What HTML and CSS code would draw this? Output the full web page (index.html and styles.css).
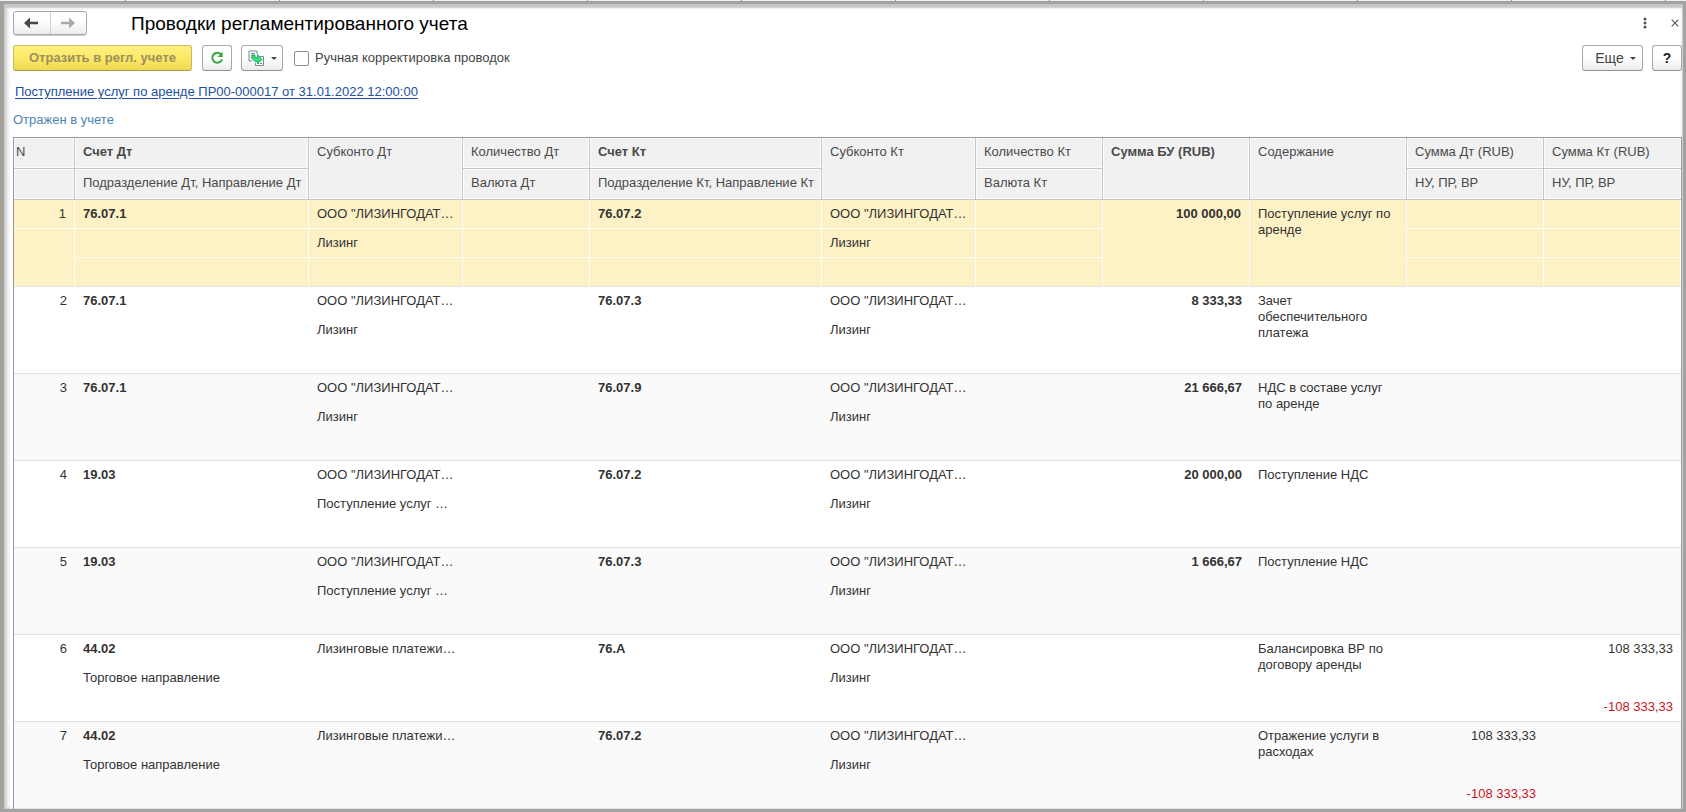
FILE: index.html
```html
<!DOCTYPE html>
<html lang="ru">
<head>
<meta charset="utf-8">
<title>Проводки регламентированного учета</title>
<link rel="stylesheet" href="styles.css">
</head>
<body>
<div class="ruler"></div>
<main class="window">
  <header class="titlebar">
    <div class="nav">
      <button class="nav-btn" type="button" aria-label="Назад"><svg width="15" height="12" viewBox="0 0 15 12"><path d="M0 6 6 0.5V4.8H14V7.2H6V11.5Z" fill="#484848"/></svg></button>
      <button class="nav-btn" type="button" aria-label="Вперед"><svg width="15" height="12" viewBox="0 0 15 12"><path d="M14 6 8 0.5V4.8H0V7.2H8V11.5Z" fill="#a9a9a9"/></svg></button>
    </div>
    <h1 class="title">Проводки регламентированного учета</h1>
    <button class="plain" type="button" aria-label="Меню"><svg width="4" height="12" viewBox="0 0 4 12" fill="#555"><circle cx="2" cy="2" r="1.5"/><circle cx="2" cy="6" r="1.5"/><circle cx="2" cy="10" r="1.5"/></svg></button>
    <button class="plain" type="button" aria-label="Закрыть"><svg width="8" height="8" viewBox="0 0 8 8"><path d="M.7.7 7.3 7.3M7.3.7.7 7.3" stroke="#555" stroke-width="1.1"/></svg></button>
  </header>
  <div class="toolbar">
    <button class="btn primary" type="button">Отразить в регл. учете</button>
    <button class="btn square" type="button" aria-label="Обновить"><svg width="14" height="14" viewBox="0 0 14 14"><path d="M11 3.3A5 5 0 1 0 12 8.3" fill="none" stroke="#36a63a" stroke-width="2"/><path d="M12.6.8V6H7.6Z" fill="#36a63a"/></svg></button>
    <button class="btn picker" type="button" aria-label="Создать на основании"><svg width="17" height="17" viewBox="0 0 17 17"><path d="M1 11V1H9V4" fill="#fff" stroke="#71869a"/><path d="M1 11H4M3 3.5H7M3 5.5H5M3 7.5H4" fill="none" stroke="#71869a"/><path d="M12 6.5H15.5V15.5H7.5V13" fill="#fff" stroke="#71869a"/><path d="M12 13.5H14M9.5 13.5H11" stroke="#71869a"/><path d="M4 5H7V7.5H9.5V4.5L14 9.5 9.5 14V11.5H7L4 8.5Z" fill="#35df7b" stroke="#159a4c" stroke-width=".8"/></svg><span class="caret"></span></button>
    <label class="check"><input type="checkbox">Ручная корректировка проводок</label>
    <button class="btn more" type="button">Еще<span class="caret"></span></button>
    <button class="btn square help" type="button">?</button>
  </div>
  <a class="doc-link" href="#">Поступление услуг по аренде ПР00-000017 от 31.01.2022 12:00:00</a>
  <p class="status">Отражен в учете</p>
  <table class="entries">
    <colgroup><col class="c-num"><col class="c-dt"><col class="c-sub"><col class="c-qty"><col class="c-kt"><col class="c-sub"><col class="c-qty"><col class="c-sum"><col class="c-text"><col class="c-tax"><col class="c-tax"></colgroup>
    <thead>
      <tr><th class="n">N</th><th class="strong">Счет Дт</th><th rowspan="2">Субконто Дт</th><th>Количество Дт</th><th class="strong">Счет Кт</th><th rowspan="2">Субконто Кт</th><th>Количество Кт</th><th class="strong" rowspan="2">Сумма БУ (RUB)</th><th rowspan="2">Содержание</th><th>Сумма Дт (RUB)</th><th>Сумма Кт (RUB)</th></tr>
      <tr><th></th><th>Подразделение Дт, Направление Дт</th><th>Валюта Дт</th><th>Подразделение Кт, Направление Кт</th><th>Валюта Кт</th><th>НУ, ПР, ВР</th><th>НУ, ПР, ВР</th></tr>
    </thead>
    <tbody class="selected">
      <tr><td class="num">1</td><td class="strong">76.07.1</td><td>ООО "ЛИЗИНГОДАТ…</td><td></td><td class="strong">76.07.2</td><td>ООО "ЛИЗИНГОДАТ…</td><td></td><td class="num strong" rowspan="3">100 000,00</td><td class="text" rowspan="3">Поступление услуг по аренде</td><td></td><td></td></tr>
      <tr><td rowspan="2"></td><td></td><td>Лизинг</td><td></td><td></td><td>Лизинг</td><td></td><td></td><td></td></tr>
      <tr><td></td><td></td><td></td><td></td><td></td><td></td><td></td><td></td></tr>
    </tbody>
    <tbody>
      <tr><td class="num">2</td><td class="strong">76.07.1</td><td>ООО "ЛИЗИНГОДАТ…</td><td></td><td class="strong">76.07.3</td><td>ООО "ЛИЗИНГОДАТ…</td><td></td><td class="num strong" rowspan="3">8 333,33</td><td class="text" rowspan="3">Зачет обеспечительного платежа</td><td></td><td></td></tr>
      <tr><td rowspan="2"></td><td></td><td>Лизинг</td><td></td><td></td><td>Лизинг</td><td></td><td></td><td></td></tr>
      <tr><td></td><td></td><td></td><td></td><td></td><td></td><td></td><td></td></tr>
    </tbody>
    <tbody class="alt">
      <tr><td class="num">3</td><td class="strong">76.07.1</td><td>ООО "ЛИЗИНГОДАТ…</td><td></td><td class="strong">76.07.9</td><td>ООО "ЛИЗИНГОДАТ…</td><td></td><td class="num strong" rowspan="3">21 666,67</td><td class="text" rowspan="3">НДС в составе услуг по аренде</td><td></td><td></td></tr>
      <tr><td rowspan="2"></td><td></td><td>Лизинг</td><td></td><td></td><td>Лизинг</td><td></td><td></td><td></td></tr>
      <tr><td></td><td></td><td></td><td></td><td></td><td></td><td></td><td></td></tr>
    </tbody>
    <tbody>
      <tr><td class="num">4</td><td class="strong">19.03</td><td>ООО "ЛИЗИНГОДАТ…</td><td></td><td class="strong">76.07.2</td><td>ООО "ЛИЗИНГОДАТ…</td><td></td><td class="num strong" rowspan="3">20 000,00</td><td class="text" rowspan="3">Поступление НДС</td><td></td><td></td></tr>
      <tr><td rowspan="2"></td><td></td><td>Поступление услуг …</td><td></td><td></td><td>Лизинг</td><td></td><td></td><td></td></tr>
      <tr><td></td><td></td><td></td><td></td><td></td><td></td><td></td><td></td></tr>
    </tbody>
    <tbody class="alt">
      <tr><td class="num">5</td><td class="strong">19.03</td><td>ООО "ЛИЗИНГОДАТ…</td><td></td><td class="strong">76.07.3</td><td>ООО "ЛИЗИНГОДАТ…</td><td></td><td class="num strong" rowspan="3">1 666,67</td><td class="text" rowspan="3">Поступление НДС</td><td></td><td></td></tr>
      <tr><td rowspan="2"></td><td></td><td>Поступление услуг …</td><td></td><td></td><td>Лизинг</td><td></td><td></td><td></td></tr>
      <tr><td></td><td></td><td></td><td></td><td></td><td></td><td></td><td></td></tr>
    </tbody>
    <tbody>
      <tr><td class="num">6</td><td class="strong">44.02</td><td>Лизинговые платежи…</td><td></td><td class="strong">76.А</td><td>ООО "ЛИЗИНГОДАТ…</td><td></td><td class="num strong" rowspan="3"></td><td class="text" rowspan="3">Балансировка ВР по договору аренды</td><td></td><td class="num">108 333,33</td></tr>
      <tr><td rowspan="2"></td><td>Торговое направление</td><td></td><td></td><td></td><td>Лизинг</td><td></td><td></td><td></td></tr>
      <tr><td></td><td></td><td></td><td></td><td></td><td></td><td></td><td class="num negative">-108 333,33</td></tr>
    </tbody>
    <tbody class="alt">
      <tr><td class="num">7</td><td class="strong">44.02</td><td>Лизинговые платежи…</td><td></td><td class="strong">76.07.2</td><td>ООО "ЛИЗИНГОДАТ…</td><td></td><td class="num strong" rowspan="3"></td><td class="text" rowspan="3">Отражение услуги в расходах</td><td class="num">108 333,33</td><td></td></tr>
      <tr><td rowspan="2"></td><td>Торговое направление</td><td></td><td></td><td></td><td>Лизинг</td><td></td><td></td><td></td></tr>
      <tr><td></td><td></td><td></td><td></td><td></td><td></td><td class="num negative">-108 333,33</td><td></td></tr>
    </tbody>
  </table>
</main>
</body>
</html>
```
FILE: styles.css
```css
* { box-sizing: border-box; }

body {
  margin: 0;
  min-height: 100vh;
  display: flex;
  flex-direction: column;
  background: #fff;
  color: #333;
  font: 13px/16px "Liberation Sans", Arial, sans-serif;
}

button, input { font: inherit; margin: 0; }

.ruler {
  height: 1px;
  background: repeating-linear-gradient(to right, #f0f2f1 0 125px, #8c8f8e 125px 126px, #f0f2f1 126px 154px);
}

.window {
  flex: 1;
  display: flex;
  flex-direction: column;
  align-items: stretch;
  padding: 7px 1px 0 9px;
  border: 3px solid #a2a2a2;
  border-left: 4px solid #a3a29b;
  box-shadow: inset 0 4px 2px #c6c6c6, inset 3px 0 4px #c9c9cb, inset -1px 0 2px #c8c8c8;
}

.titlebar { display: flex; align-items: center; height: 24px; padding-right: 3px; }

.nav {
  display: flex;
  width: 74px;
  height: 24px;
  border: 1px solid #a6a6a6;
  border-radius: 3px;
  background: linear-gradient(#fff 40%, #ececec);
  box-shadow: 0 1px #d0d0d0;
}

.nav-btn {
  flex: 1;
  display: flex;
  align-items: center;
  justify-content: center;
  padding: 0;
  border: 0;
  background: none;
}
.nav-btn + .nav-btn { border-left: 1px solid #cfcfcf; }

.title {
  flex: 1;
  margin: 0 0 0 44px;
  padding-top: 2px;
  color: #000;
  font-size: 19px;
  line-height: 22px;
  font-weight: 400;
}

.plain { display: flex; padding: 0; border: 0; background: none; }
.plain + .plain { margin-left: 24px; }

.toolbar { display: flex; align-items: center; margin-top: 10px; height: 26px; }

.btn {
  display: flex;
  align-items: center;
  justify-content: center;
  height: 26px;
  padding: 0;
  border: 1px solid #a8a8a8;
  border-bottom-color: #929292;
  border-radius: 3px;
  background: linear-gradient(#fff 50%, #ebebeb);
  color: #444;
}
.primary {
  width: 179px;
  border-color: #c9bc5e;
  border-bottom-color: #a99d4b;
  background: linear-gradient(#fff080, #fbe967 50%, #efd951);
  color: #9a9060;
  font-weight: 700;
}
.square { width: 30px; margin-left: 10px; }
.picker { width: 42px; margin-left: 9px; gap: 6px; }
.more { width: 61px; margin-left: auto; gap: 6px; padding-left: 6px; font-size: 14px; }
.help { color: #222; margin-left: 9px; font-size: 14px; font-weight: 700; }

.caret {
  width: 0;
  height: 0;
  border: 3px solid transparent;
  border-top-color: #444;
  border-bottom: 0;
}

.check { display: flex; align-items: center; gap: 6px; margin-left: 11px; color: #444; }
.check input {
  appearance: none;
  width: 15px;
  height: 15px;
  border: 1px solid #8d8d8d;
  border-radius: 2px;
  background: #fff;
}

.doc-link {
  align-self: flex-start;
  margin: 13px 0 0 2px;
  color: #2150a0;
  text-underline-offset: 2px;
}

.status { margin: 12px 0 9px; color: #4d84b4; }

.entries {
  width: 100%;
  table-layout: fixed;
  border-collapse: separate;
  border-spacing: 0;
  border: 1px solid #999;
  border-bottom: 0;
}

.c-num { width: 61px; }
.c-dt { width: 234px; }
.c-sub { width: 154px; }
.c-qty { width: 127px; }
.c-kt { width: 232px; }
.c-sum { width: 147px; }
.c-text { width: 157px; }
.c-tax { width: 137px; }

.entries th, .entries td {
  padding: 6px 8px;
  text-align: left;
  vertical-align: top;
  font-weight: 400;
  white-space: nowrap;
}
.entries th {
  height: 31px;
  border-right: 1px solid #c6c6c6;
  border-bottom: 1px solid #c6c6c6;
  background: #f1f1f1;
  box-shadow: inset 0 0 0 1px #fbfbfb;
  color: #4a4a4a;
}
.entries th:last-child { border-right: 0; }
.entries th.n { padding-left: 2px; }
.entries td { height: 29px; }
.entries .strong { font-weight: 700; }
.entries td.num { text-align: right; }
.entries td.text { padding-right: 12px; white-space: normal; }
.entries td.negative { color: #c8141e; }

.entries tbody tr:last-child td, .entries td[rowspan] { border-bottom: 1px solid #e2e2e2; }
.alt td { background: #fafafa; }
.selected td {
  background: #fdf1c6;
  border-right: 1px solid #fffdf5;
  border-bottom: 1px solid #fffdf5;
}
```
